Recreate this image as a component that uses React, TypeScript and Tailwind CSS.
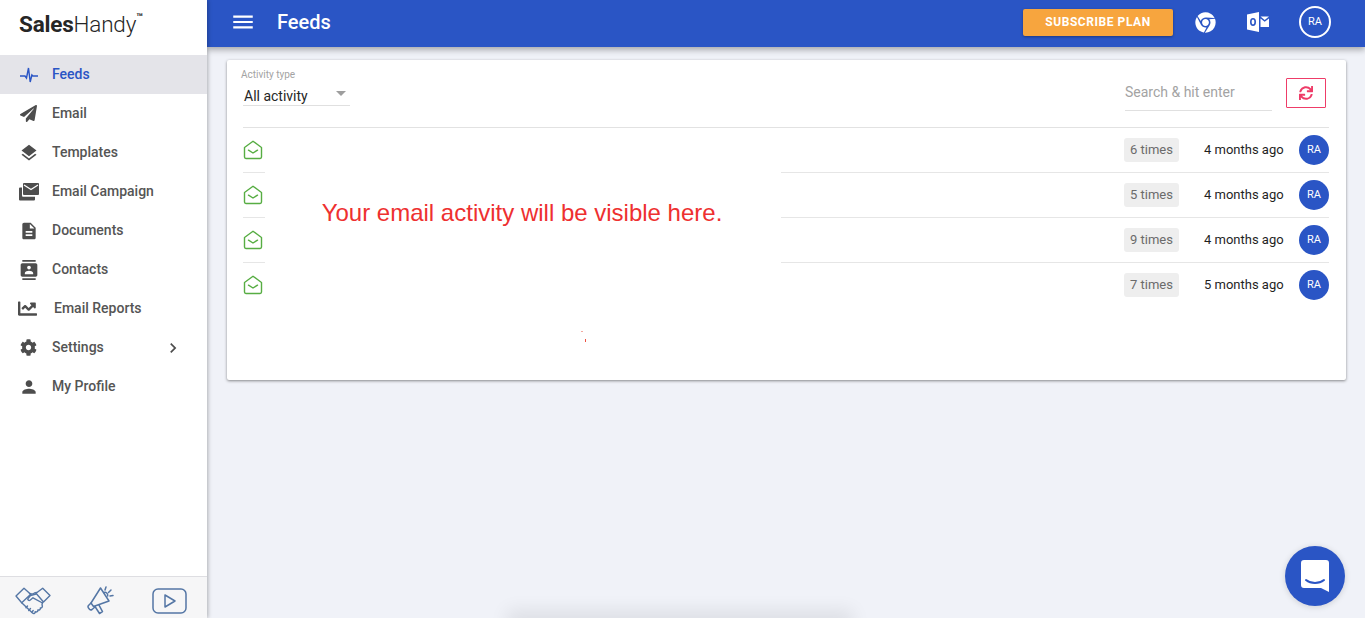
import React from "react";
import { FaPaperPlane, FaChrome, FaSync, FaCog, FaChartLine } from "react-icons/fa";
import { MdLayers, MdDescription, MdContacts, MdPerson, MdChevronRight, MdMenu } from "react-icons/md";

const Pulse = () => (
  <svg width="20" height="20" viewBox="0 0 20 20" fill="none" stroke="#2a55c5" strokeWidth="1.4">
    <path d="M1 11h5l1.500 2L9.500 3l1.700 14 1.700-7 1 1H19" />
  </svg>
);

const Campaign = () => (
  <svg width="20" height="18" viewBox="0 0 20 18" fill="#4d4d4d">
    <path d="M5 0h14a1 1 0 0 1 1 1v10a1 1 0 0 1-1 1H5a1 1 0 0 1-1-1V1a1 1 0 0 1 1-1z" />
    <path d="M5 2l7 4.500L19 2" fill="none" stroke="#fff" strokeWidth="1.300" />
    <path d="M0 5.500a1 1 0 0 1 1-1h2v8.300a1 1 0 0 0 1 1h12V16.500a1 1 0 0 1-1 1H1a1 1 0 0 1-1-1z" />
  </svg>
);

const Outlook = () => (
  <svg width="22" height="20" viewBox="0 0 22 20">
    <path d="M0 2.500 12 0v20L0 17.500z" fill="#fff" />
    <ellipse cx="6" cy="10" rx="2.200" ry="3.200" fill="none" stroke="#2a55c5" strokeWidth="1.600" />
    <path d="M13.500 4.500H22L17.700 8z" fill="#fff" />
    <path d="M13.500 6.500l4.200 3.300L22 6.500v8.500h-8.500z" fill="#fff" />
  </svg>
);

const OpenMail = () => (
  <svg width="20" height="20" viewBox="0 0 20 20" fill="none" stroke="#57ad43" strokeWidth="1.4" strokeLinejoin="round" strokeLinecap="round">
    <path d="M1.500 7.500 10 1.200l8.500 6.300v9.600a1.400 1.400 0 0 1-1.400 1.400H2.900a1.400 1.400 0 0 1-1.400-1.400z" />
    <path d="M5.500 10.200 10 13l4.500-2.800" />
  </svg>
);

const Handshake = () => (
  <svg width="36" height="30" viewBox="0 0 36 30" fill="none" stroke="#5476a5" strokeWidth="1.400" strokeLinejoin="round" strokeLinecap="round">
    <path d="M1 10 9 2.300l6.700 6L6.700 16.700z" />
    <path d="M35 9.500 27.700 2.300 21 7.300 28.500 16z" />
    <path d="M14.500 7.500c2 1 3.500 .5 5-.5l2-.5" />
    <path d="M21 8l-5.500 1.500-2.500 3c-.8 1.500 1 2.500 2.300 1.500l2.700-2.200L27.500 17" />
    <path d="M6.700 16.700 17.500 27c1.300 1 3 .2 2.700-1.300 1.500.7 3-.3 2.700-1.800 1.500.5 2.800-.6 2.500-2 1.500.2 2.600-1.500 1.600-3l.5-2.400" />
    <path d="M12.500 20l-1.500 1.800M15.500 22.500l-1.800 2M18.200 24.500l-1.200 1.500" />
  </svg>
);

const Megaphone = () => (
  <svg width="30" height="30" viewBox="0 0 30 30" fill="none" stroke="#5476a5" strokeWidth="1.5" strokeLinejoin="round" strokeLinecap="round">
    <path d="M13.500 2 22 15l-15.500 5.500L4 17z" />
    <path d="M4 17 1.500 19.500a2 2 0 0 0 0 2.500l1 1.200a2 2 0 0 0 2.500.3L8 21" />
    <path d="M8 20.500l4.500 7 3-1.800-3.500-6.500" />
    <path d="M17 6.500c2-.8 4 .8 3.700 3.500" />
    <path d="M19 1l-1 3M24 4l-2.500 2.500M26 9.500l-3 .5" />
  </svg>
);

const Video = () => (
  <svg width="35" height="26" viewBox="0 0 35 26" fill="none" stroke="#5476a5" strokeWidth="1.500" strokeLinejoin="round">
    <rect x="1" y="1" width="33" height="24" rx="5" />
    <path d="M13 7v12l10-6z" />
  </svg>
);

const nav: { label: string; icon: React.ReactNode; active?: boolean; chevron?: boolean; wide?: boolean }[] = [
  { label: "Feeds", icon: <Pulse />, active: true },
  { label: "Email", icon: <FaPaperPlane size={17} color="#4d4d4d" /> },
  { label: "Templates", icon: <MdLayers size={20} color="#4d4d4d" /> },
  { label: "Email Campaign", icon: <Campaign /> },
  { label: "Documents", icon: <MdDescription size={20} color="#4d4d4d" /> },
  { label: "Contacts", icon: <MdContacts size={20} color="#4d4d4d" /> },
  { label: "Email Reports", icon: <FaChartLine size={19} color="#4d4d4d" className="-ml-[3px]" />, wide: true },
  { label: "Settings", icon: <FaCog size={17} color="#4d4d4d" />, chevron: true },
  { label: "My Profile", icon: <MdPerson size={20} color="#4d4d4d" /> },
];

const rows = [
  { times: "6 times", ago: "4 months ago" },
  { times: "5 times", ago: "4 months ago" },
  { times: "9 times", ago: "4 months ago" },
  { times: "7 times", ago: "5 months ago" },
];

export default function App() {
  return (
    <div className="relative flex h-[618px] w-[1365px] overflow-hidden bg-[#f0f2f8] font-['Roboto',sans-serif]">
      <aside className="z-10 flex h-full w-[207px] shrink-0 flex-col bg-white shadow-[1px_0_4px_rgba(0,0,0,0.28)]">
        <div className="flex h-[55px] shrink-0 items-start pl-[19px] pt-[10px]">
          <span className="text-[22.5px] leading-[29px] tracking-[-0.2px] text-[#262626]">
            <span className="font-bold">Sales</span>
            <span className="font-light">Handy</span>
          </span>
          <span className="mt-[2px] text-[11px] font-bold leading-[12px] text-[#262626]">™</span>
        </div>
        <nav className="flex flex-col">
          {nav.map((n) => (
            <div
              key={n.label}
              className={`flex h-[39px] items-center text-[14px] font-medium ${n.active ? "bg-[#e4e4e9] text-[#2a55c5]" : "text-[#555555]"}`}
            >
              <span className="flex w-[57px] shrink-0 justify-center">{n.icon}</span>
              <span className={n.wide ? "-ml-[3px]" : "-ml-[5px]"}>{n.label}</span>
              {n.chevron && <MdChevronRight size={20} className="ml-auto mr-[24px]" color="#4d4d4d" />}
            </div>
          ))}
        </nav>
        <div className="mt-auto flex h-[42px] items-start justify-between border-t border-[#dedee2] bg-[#f6f6f7] pl-[15px] pr-[20px] pt-[9px]">
          <Handshake />
          <Megaphone />
          <span className="mt-[2px]"><Video /></span>
        </div>
      </aside>

      <div className="flex min-w-0 flex-1 flex-col">
        <header className="z-[5] flex h-[47px] shrink-0 items-center bg-[#2a55c5] pb-[3px] pl-[25px] pr-[34px] shadow-[0_3px_6px_rgba(0,0,0,0.3)]">
          <MdMenu size={26} color="#fff" className="-ml-[2px]" />
          <h1 className="ml-[21px] text-[20px] font-medium text-white">Feeds</h1>
          <button className="ml-auto mr-[-1px] flex h-[27px] w-[150px] items-center justify-center rounded-[2px] bg-[#f7a53e] text-[12px] font-bold tracking-[0.55px] text-white shadow-[0_1px_3px_rgba(0,0,0,0.35)]">
            SUBSCRIBE PLAN
          </button>
          <FaChrome size={21} color="#fff" className="ml-[23px]" />
          <span className="ml-[31px]"><Outlook /></span>
          <div className="ml-[30px] flex h-[32px] w-[32px] items-center justify-center rounded-full border-2 border-white text-[11px] text-white">
            RA
          </div>
        </header>

        <main className="relative ml-[20px] mr-[19px] mt-[13px] h-[320px] rounded-[2px] bg-white pl-[16px] pr-[17px] shadow-[0_1px_3px_rgba(0,0,0,0.45)]">
          <div className="flex h-[68px] items-start justify-between border-b border-[#e2e2e2]">
            <div className="w-[107px]">
              <div className="-ml-[2px] mt-[9px] text-[10px] leading-[12px] text-[#a3a3a3]">Activity type</div>
              <div className="flex h-[25px] items-center justify-between border-b border-[#e0e0e0] pl-[1px] pr-[4px] pt-[6px] text-[14px] text-[#262626]">
                <span>All activity</span>
                <span className="mb-[6px] h-0 w-0 border-x-[5px] border-t-[5px] border-x-transparent border-t-[#9e9e9e]" />
              </div>
            </div>
            <div className="flex items-start">
              <div className="mr-[14px] mt-[18px] h-[33px] w-[147px] border-b border-[#e0e0e0] text-[14px] leading-[29px] text-[#a3a3a3]">
                Search &amp; hit enter
              </div>
              <button className="mr-[3px] mt-[18px] flex h-[30px] w-[40px] items-center justify-center rounded-[1px] border border-[#ee3c68]">
                <FaSync size={14} color="#ee3c68" />
              </button>
            </div>
          </div>

          {rows.map((r, i) => (
            <div key={i} className={`flex h-[45px] items-center border-b ${i < 3 ? "border-[#e6e6e6]" : "border-transparent"}`}>
              <OpenMail />
              <span className="ml-auto flex h-[24px] w-[55px] items-center justify-center rounded-[3px] bg-[#eeeeee] text-[13px] text-[#6b6b6b]">
                {r.times}
              </span>
              <span className="ml-[25px] w-[79px] whitespace-nowrap text-right text-[13px] text-[#1f1f1f]">{r.ago}</span>
              <span className="ml-[16px] flex h-[30px] w-[30px] items-center justify-center rounded-full bg-[#2a55c5] pt-[1px] text-[11px] text-white">
                RA
              </span>
            </div>
          ))}

          <div className="absolute left-[38px] top-[69px] flex h-[242px] w-[516px] items-start justify-center bg-white pr-[2px] pt-[70px] font-['Liberation_Sans',sans-serif] text-[24px] leading-[28px] text-[#ee3030]">
            Your email activity will be visible here.
          </div>
          <span className="absolute left-[354px] top-[271px] h-[1px] w-[2px] bg-[#f3a9a0]" />
          <span className="absolute left-[358px] top-[279px] h-[3px] w-[1px] bg-[#ee5040]" />
        </main>
      </div>

      <div className="absolute bottom-[-8px] left-[515px] h-[8px] w-[330px] shadow-[0_0_18px_8px_rgba(0,0,0,0.08)]" />

      <div className="absolute left-[1285px] top-[546px] flex h-[60px] w-[60px] items-center justify-center rounded-full bg-[#2a55c5] shadow-[0_1px_6px_rgba(0,0,0,0.15)]">
        <svg width="28" height="32" viewBox="0 0 28 32">
          <path d="M3 0h22a3 3 0 0 1 3 3v29l-8-4H3a3 3 0 0 1-3-3V3a3 3 0 0 1 3-3z" fill="#fff" />
          <path d="M5 20c5 4 13 4 18 0" fill="none" stroke="#2a55c5" strokeWidth="2" strokeLinecap="round" />
        </svg>
      </div>
    </div>
  );
}
